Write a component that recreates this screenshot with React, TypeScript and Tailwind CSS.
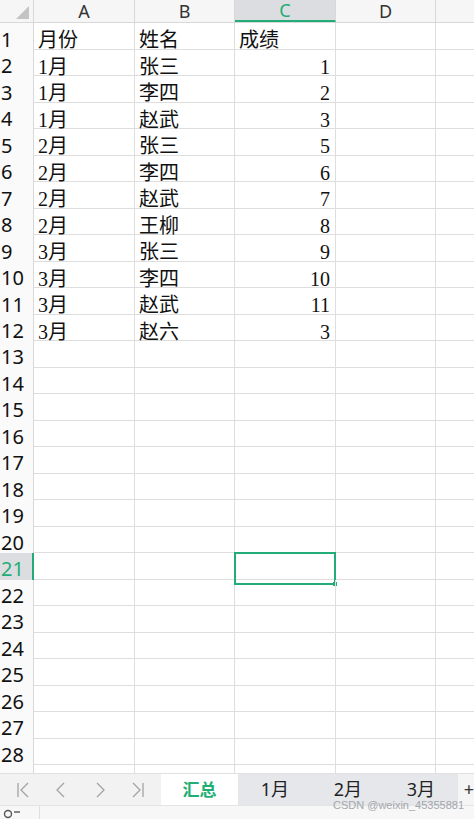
import React from "react";

const rows: [string, string, string][] = [
  ["月份", "姓名", "成绩"],
  ["1月", "张三", "1"],
  ["1月", "李四", "2"],
  ["1月", "赵武", "3"],
  ["2月", "张三", "5"],
  ["2月", "李四", "6"],
  ["2月", "赵武", "7"],
  ["2月", "王柳", "8"],
  ["3月", "张三", "9"],
  ["3月", "李四", "10"],
  ["3月", "赵武", "11"],
  ["3月", "赵六", "3"],
];

const cellFont = { fontFamily: '"Liberation Serif", "Noto Sans CJK SC", serif' };
const uiFont = { fontFamily: '"Noto Sans", "Noto Sans CJK SC", sans-serif' };

function NavIcon({ d }: { d: string }) {
  return (
    <svg width="16" height="20" viewBox="0 0 16 20" fill="none" stroke="#a3a3a3" strokeWidth="1.3">
      <path d={d} />
    </svg>
  );
}

export default function App() {
  const total = 29;
  return (
    <div className="relative h-[819px] w-[474px] overflow-hidden bg-white">
      {/* Sheet grid */}
      <div className="h-[773px] overflow-hidden">
        {/* Column header */}
        <div
          className="grid h-[23px] grid-cols-[34px_101px_100px_101px_100px_38px] border-b border-[#d8d8d8] bg-[#f6f6f7] text-[18px] text-[#333]"
          style={uiFont}
        >
          <div className="relative border-r border-[#d8d8d8]">
            <div className="absolute bottom-[3px] right-[4px] h-0 w-0 border-b-[13px] border-l-[13px] border-b-[#c4c4c4] border-l-transparent" />
          </div>
          <div className="flex items-center justify-center border-r border-[#d8d8d8] leading-none">A</div>
          <div className="flex items-center justify-center border-r border-[#d8d8d8] leading-none">B</div>
          <div className="flex items-center justify-center border-b-2 border-r border-b-[#22ad78] border-r-[#d8d8d8] bg-[#dcdde0] leading-none text-[#22ad78]">
            C
          </div>
          <div className="flex items-center justify-center border-r border-[#d8d8d8] leading-none">D</div>
          <div />
        </div>

        {Array.from({ length: total }, (_, i) => {
          const n = i + 1;
          const data = rows[i];
          const active = n === 21;
          return (
            <div
              key={n}
              className="grid h-[26.5px] grid-cols-[34px_101px_100px_101px_100px_38px] border-b border-[#dedede] text-[20px] text-[#111]"
            >
              <div
                className={
                  active
                    ? "flex items-center border-r-2 border-[#22ad78] bg-[#dcdde0] pl-[1px] pt-[1px] text-[20px] text-[#22ad78]"
                    : "flex items-center border-r border-[#d8d8d8] bg-[#fafafa] pl-[1px] pt-[1px] text-[20px] text-[#111]"
                }
                style={uiFont}
              >
                {n}
              </div>
              <div className="flex items-center border-r border-[#dedede] pl-[4px] pt-[2px]" style={cellFont}>
                {data ? data[0] : ""}
              </div>
              <div className="flex items-center border-r border-[#dedede] pl-[4px] pt-[2px]" style={cellFont}>
                {data ? data[1] : ""}
              </div>
              <div
                className={
                  i === 0
                    ? "flex items-center border-r border-[#dedede] pl-[4px] pt-[2px]"
                    : "relative flex items-center justify-end border-r border-[#dedede] pr-[5px] pt-[2px]"
                }
                style={cellFont}
              >
                {data ? data[2] : ""}
                {active && (
                  <div className="absolute -bottom-[1px] -left-[1px] -right-[1px] -top-[1px] border-2 border-[#22ad78]">
                    <div className="absolute -bottom-[3px] -right-[3px] h-[4px] w-[4px] bg-[#22ad78]" />
                  </div>
                )}
              </div>
              <div className="border-r border-[#dedede]" />
              <div />
            </div>
          );
        })}
      </div>

      {/* Sheet tabs */}
      <div className="flex h-[32px] border-t border-[#e0e0e0]" style={uiFont}>
        <div className="flex w-[162px] items-center justify-around bg-[#f2f2f3] px-[4px]">
          <NavIcon d="M3 3v14M13 3L6 10l7 7" />
          <NavIcon d="M11 3L4 10l7 7" />
          <NavIcon d="M5 3l7 7-7 7" />
          <NavIcon d="M3 3l7 7-7 7M13 3v14" />
        </div>
        <div className="flex w-[78px] items-center justify-center bg-white text-[17px] font-bold text-[#1fae73]">汇总</div>
        <div className="flex w-[221px] items-center bg-[#e6e7ea] text-[18px] text-[#222]">
          <div className="flex w-[73px] items-center justify-center">1月</div>
          <div className="flex w-[73px] items-center justify-center">2月</div>
          <div className="flex w-[73px] items-center justify-center">3月</div>
        </div>
        <div className="flex flex-1 items-center bg-[#f5f5f6] pl-[6px] text-[18px] text-[#333]">+</div>
      </div>

      {/* Status bar */}
      <div className="flex h-[14px] border-t border-[#e4e4e4] bg-[#f7f7f8]">
        <div className="w-[40px] border-r border-[#e0e0e0] pl-[3px] pt-[2px]">
          <svg width="22" height="12" viewBox="0 0 22 12" fill="none" stroke="#555" strokeWidth="1.4">
            <circle cx="5" cy="6" r="3.5" />
            <path d="M11 4h6" />
          </svg>
        </div>
      </div>

      {/* Watermark */}
      <div
        className="absolute left-[333px] top-[800px] whitespace-nowrap text-[11px] leading-none text-[#9aa0a6] opacity-90"
        style={{ fontFamily: '"Liberation Sans", sans-serif' }}
      >
        CSDN @weixin_45355881
      </div>
    </div>
  );
}
